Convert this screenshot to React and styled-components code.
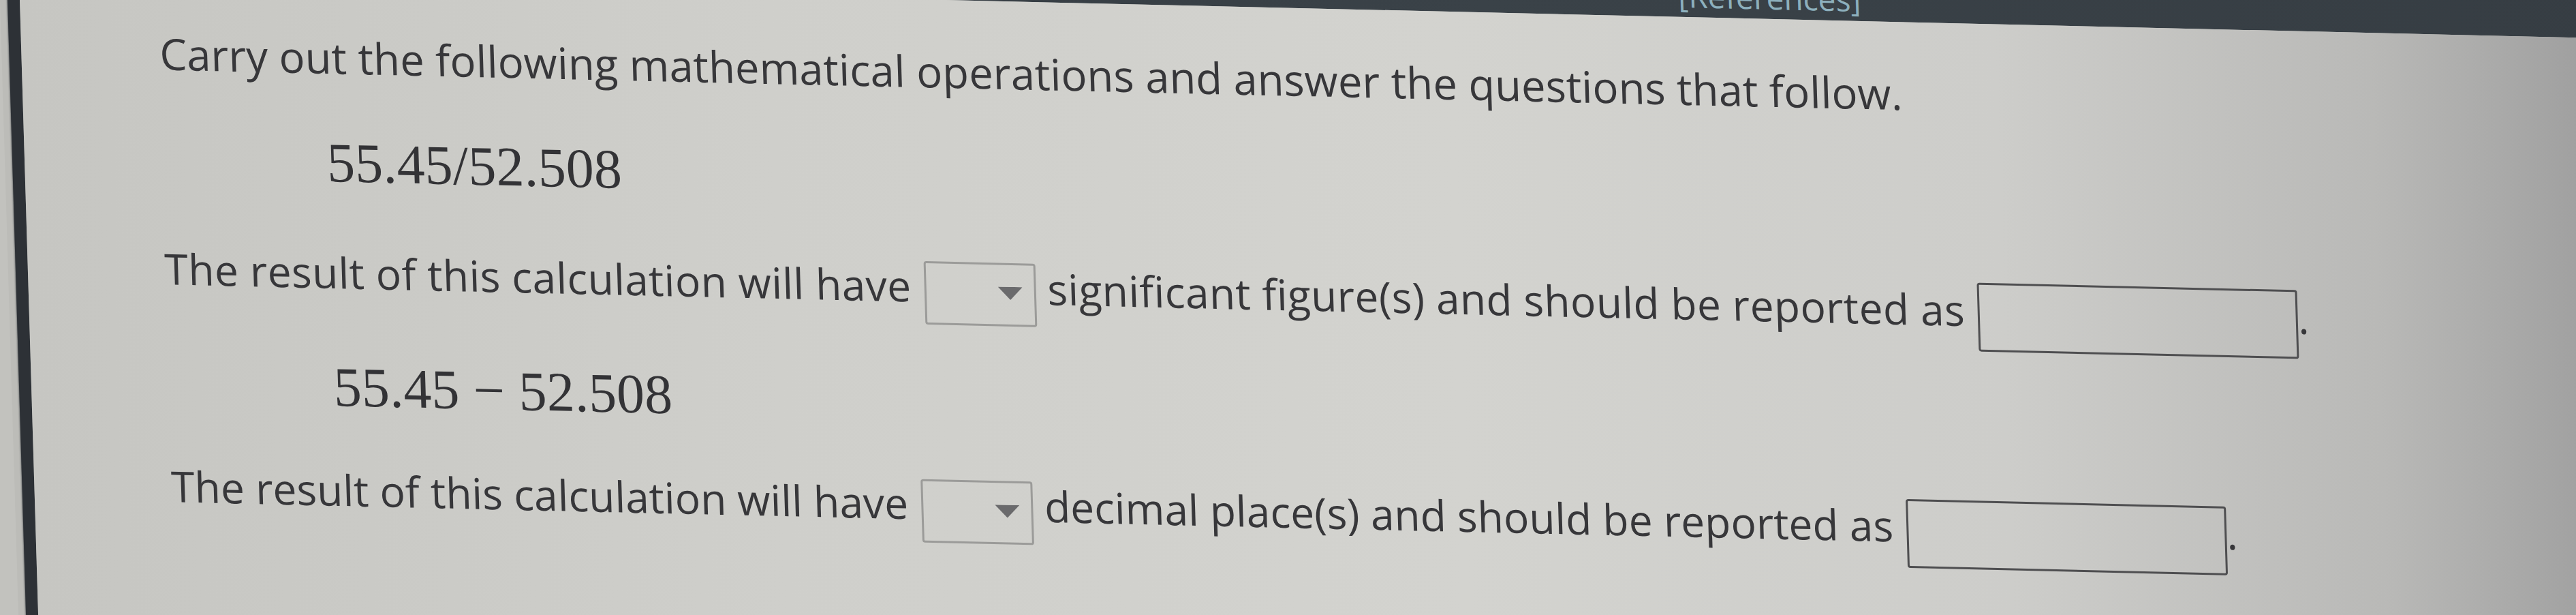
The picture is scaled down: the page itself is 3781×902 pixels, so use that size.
import React from "react";
import styled, { createGlobalStyle } from "styled-components";

const Global = createGlobalStyle`
  html, body {
    margin: 0;
    padding: 0;
    width: 3781px;
    height: 902px;
    overflow: hidden;
    background: #c2c2be;
    font-family: "Open Sans", "Noto Sans", sans-serif;
  }
  #root {
    width: 3781px;
    height: 902px;
    overflow: hidden;
  }
`;

/* The whole screen is photographed at an angle: a slight skew stands in for the perspective. */
const Screen = styled.div`
  width: 3960px;
  height: 1130px;
  margin-top: -92px;
  transform-origin: 0 92px;
  transform: skew(1.72deg, 1.32deg);
  display: flex;
  flex-direction: column;
`;

const TopBar = styled.header`
  flex: none;
  height: 60px;
  box-sizing: border-box;
  padding: 5px 0 0 2465px;
  background: linear-gradient(90deg, #30363c 0%, #3a4248 55%, #363d43 100%);
`;

const RefLink = styled.span`
  font-family: "Open Sans", sans-serif;
  font-size: 46px;
  line-height: 1;
  color: #8db0bd;
`;

const Body = styled.div`
  flex: 1;
  display: flex;
`;

const OuterMargin = styled.div`
  flex: none;
  width: 11px;
  background: #bcbcb8;
`;

const PanelEdge = styled.div`
  flex: none;
  width: 18px;
  background: #2d3136;
  box-shadow: 0 0 3px #2d3136;
`;

const Panel = styled.main`
  flex: 1;
  box-sizing: border-box;
  padding: 67px 0 0 201px;
  display: flex;
  flex-direction: column;
  align-items: flex-start;
  background: linear-gradient(
    90deg,
    #c6c6c2 0px,
    #cfcfcb 1100px,
    #d3d3cf 2100px,
    #cdcdca 2900px,
    #b9b9b7 3450px,
    #9e9e9e 3780px
  );
`;

const Prompt = styled.p`
  margin: 0 0 0 2px;
  font-family: "Open Sans", sans-serif;
  font-size: 63.4px;
  font-weight: 500;
  line-height: 76px;
  color: #37373a;
  white-space: nowrap;
`;

const MathLine = styled.div`
  margin: ${(p) => p.$top}px 0 0 243px;
  font-family: "Liberation Serif", "Times New Roman", serif;
  font-size: 82px;
  line-height: 1.2;
  color: #333336;
  white-space: nowrap;
`;

/* $tracking compensates for the camera's perspective, which stretches the upper row a little. */
const AnswerRow = styled.div`
  margin-top: ${(p) => p.$top}px;
  display: flex;
  align-items: center;
  white-space: nowrap;
  letter-spacing: ${(p) => p.$tracking || 0}px;
`;

const Phrase = styled.span`
  font-family: "Open Sans", sans-serif;
  font-size: 62.3px;
  font-weight: 500;
  line-height: 74px;
  padding-bottom: 22px;
  color: #37373a;
`;

const Select = styled.div`
  flex: none;
  width: 164px;
  height: 93px;
  box-sizing: border-box;
  margin: 0 17px 0 19px;
  padding: 0 17px 4px 0;
  border: 3px solid #9b9b99;
  border-radius: 4px;
  display: flex;
  align-items: center;
  justify-content: flex-end;
`;

const Field = styled.div`
  flex: none;
  width: 470px;
  height: 101px;
  box-sizing: border-box;
  margin-left: 19px;
  border: 3px solid #4e4e50;
  border-radius: 4px;
`;

const Caret = () => (
  <svg width="36" height="19" viewBox="0 0 36 19" aria-hidden="true">
    <polygon points="0,0 36,0 18,19" fill="#6a6a6c" />
  </svg>
);

const Question = ({ top, tracking, lead, unit }) => (
  <AnswerRow $top={top} $tracking={tracking}>
    <Phrase>{lead}</Phrase>
    <Select>
      <Caret />
    </Select>
    <Phrase>{unit}</Phrase>
    <Field />
    <Phrase>.</Phrase>
  </AnswerRow>
);

export default function App() {
  return (
    <>
      <Global />
      <Screen>
        <TopBar>
          <RefLink>[References]</RefLink>
        </TopBar>
        <Body>
          <OuterMargin />
          <PanelEdge />
          <Panel>
            <Prompt>
              Carry out the following mathematical operations and answer the questions that follow.
            </Prompt>
            <MathLine $top={68}>55.45/52.508</MathLine>
            <Question
              top={71}
              tracking={0.35}
              lead="The result of this calculation will have"
              unit="significant figure(s) and should be reported as"
            />
            <MathLine $top={59}>55.45 − 52.508</MathLine>
            <Question
              top={61}
              lead="The result of this calculation will have"
              unit="decimal place(s) and should be reported as"
            />
          </Panel>
        </Body>
      </Screen>
    </>
  );
}
